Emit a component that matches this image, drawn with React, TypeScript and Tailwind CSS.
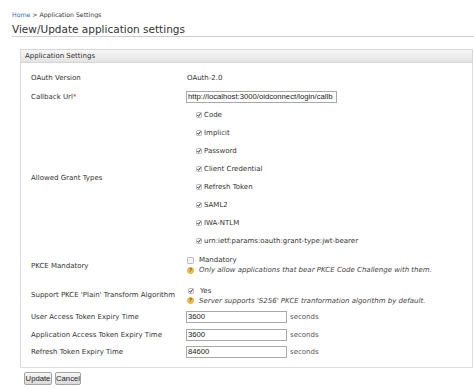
import React from "react";

const grantTypes = [
  "Code",
  "Implicit",
  "Password",
  "Client Credential",
  "Refresh Token",
  "SAML2",
  "IWA-NTLM",
  "urn:ietf:params:oauth:grant-type:jwt-bearer",
];

const expiryRows = [
  { label: "User Access Token Expiry Time", value: "3600", h: "h-[18px]" },
  { label: "Application Access Token Expiry Time", value: "3600", h: "h-[17px]" },
  { label: "Refresh Token Expiry Time", value: "84600", h: "h-[17px]" },
];

function Check({ checked }: { checked: boolean }) {
  return (
    <svg width="6" height="6" viewBox="0 0 6 6" className="shrink-0">
      <rect x="0.5" y="0.5" width="5" height="5" rx="0.8" fill="#f7f7f7" stroke="#b8b8b8" />
      {checked && (
        <path d="M1.4 3.2 L2.5 4.3 L4.7 1.4" stroke="#2a2a2a" strokeWidth="1" fill="none" />
      )}
    </svg>
  );
}

function HelpIcon() {
  return (
    <svg width="7" height="7" viewBox="0 0 7 7" className="shrink-0">
      <circle cx="3.5" cy="3.5" r="3" fill="#f6c451" stroke="#d99a22" strokeWidth="0.8" />
      <text x="3.5" y="5.3" textAnchor="middle" fontSize="5" fontWeight="bold" fill="#7a4d00" fontFamily="DejaVu Sans, sans-serif">
        ?
      </text>
    </svg>
  );
}

function TextInput({ value, w }: { value: string; w: string }) {
  return (
    <div className={`${w} h-[12px] ml-[1px] border border-[#a8a8a8] bg-white flex items-center pl-[1px] text-[7.7px] leading-none text-[#222] font-['Liberation_Sans',Arial,sans-serif] overflow-hidden whitespace-nowrap`}>
      {value}
    </div>
  );
}

export default function App() {
  return (
    <div className="w-[474px] h-[389px] overflow-hidden bg-white text-[#333] font-['DejaVu_Sans',sans-serif]">
      {/* Breadcrumb */}
      <div className="pl-[12px] pt-[11px] text-[6.2px] leading-[8px]">
        <span className="text-[#2f6db5]">Home</span> &gt; Application Settings
      </div>

      {/* Title */}
      <div className="ml-[12px] mt-[3px] h-[15px] border-b border-[#cdcdd8] text-[10.5px] leading-[14px] text-[#333]">
        View/Update application settings
      </div>

      {/* Panel */}
      <div className="ml-[20px] mt-[12px] w-[453px]">
        <div className="h-[14px] border border-[#d6d6d6] bg-gradient-to-b from-[#f7f7f7] to-[#e3e3e3] pl-[4px] text-[7px] leading-[12px] text-[#333]">
          Application Settings
        </div>

        <div className="border-l border-r border-b border-[#dcdcdc] pt-[5px] pb-[7px] text-[7px] leading-[10px]">
          <div className="flex h-[19px] items-center">
            <div className="w-[164px] pl-[10px]">OAuth Version</div>
            <div className="pl-[2px]">OAuth-2.0</div>
          </div>

          <div className="flex h-[19px] items-center">
            <div className="w-[164px] pl-[10px]">
              Callback Url<span className="text-[#c0392b]">*</span>
            </div>
            <TextInput value="http://localhost:3000/oidconnect/login/callb" w="w-[151px]" />
          </div>

          <div className="flex items-center">
            <div className="w-[164px] pl-[10px]">Allowed Grant Types</div>
            <div className="flex flex-col">
              {grantTypes.map((g) => (
                <div key={g} className="flex h-[18px] items-center gap-[2px] pl-[11px]">
                  <Check checked />
                  <span>{g}</span>
                </div>
              ))}
            </div>
          </div>

          <div className="flex h-[32px] items-center">
            <div className="w-[164px] pl-[10px]">PKCE Mandatory</div>
            <div className="flex flex-col pb-[2px]">
              <div className="flex h-[10px] items-center gap-[5px] pl-[2px]">
                <svg width="7" height="7" viewBox="0 0 7 7" className="shrink-0">
                  <rect x="0.5" y="0.5" width="6" height="6" rx="0.8" fill="#f3f3f3" stroke="#b8b8b8" />
                </svg>
                <span>Mandatory</span>
              </div>
              <div className="flex h-[10px] items-center gap-[5px] pl-[2px] italic text-[#444]">
                <HelpIcon />
                <span>Only allow applications that bear PKCE Code Challenge with them.</span>
              </div>
            </div>
          </div>

          <div className="flex h-[26px] items-center">
            <div className="w-[164px] pl-[10px]">Support PKCE 'Plain' Transform Algorithm</div>
            <div className="flex flex-col pt-[1px]">
              <div className="flex h-[10px] items-center gap-[6px] pl-[3px]">
                <Check checked />
                <span>Yes</span>
              </div>
              <div className="flex h-[10px] items-center gap-[5px] pl-[2px] italic text-[#444]">
                <HelpIcon />
                <span>Server supports 'S256' PKCE tranformation algorithm by default.</span>
              </div>
            </div>
          </div>

          {expiryRows.map((r) => (
            <div key={r.label} className={`flex ${r.h} items-center`}>
              <div className="w-[164px] pl-[10px]">{r.label}</div>
              <TextInput value={r.value} w="w-[101px]" />
              <span className="ml-[3px] text-[#555]">seconds</span>
            </div>
          ))}
        </div>
      </div>

      {/* Buttons */}
      <div className="ml-[24px] mt-[4px] flex gap-[3px] font-['Liberation_Sans',Arial,sans-serif] text-[7.7px] text-[#222]">
        <button className="h-[13px] w-[28px] rounded-[2px] border border-[#a4a4a4] bg-gradient-to-b from-[#f8f8f8] to-[#dadada] leading-none">
          Update
        </button>
        <button className="h-[13px] w-[26px] rounded-[2px] border border-[#a4a4a4] bg-gradient-to-b from-[#f8f8f8] to-[#dadada] leading-none">
          Cancel
        </button>
      </div>
    </div>
  );
}
